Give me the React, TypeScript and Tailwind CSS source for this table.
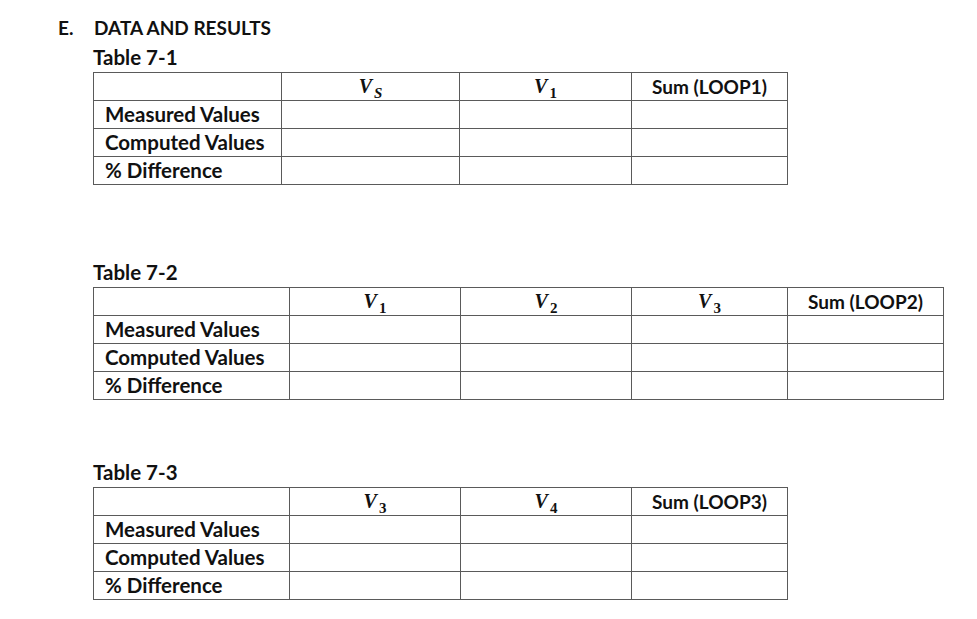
import React from 'react';

// Header cell content: either plain text or a math symbol V with subscript
type Head = { v: string; italicSub?: boolean } | { text: string };

interface LabTableProps {
  cols: string;
  heads: Head[];
}

const rowLabels = ['Measured Values', 'Computed Values', '% Difference'];

const MathV: React.FC<{ sub: string; italicSub?: boolean }> = ({ sub, italicSub }) => (
  <span className="font-[family-name:'Liberation_Serif',serif] italic font-bold text-[20px] leading-none">
    V
    <sub className={`text-[15px] ml-[2px] relative top-[5px] ${italicSub ? 'italic' : 'not-italic'}`}>{sub}</sub>
  </span>
);

const LabTable: React.FC<LabTableProps> = ({ cols, heads }) => {
  const cell = 'h-[28px] border-l border-t border-[#5a5a5a]';
  return (
    <div className={`grid ${cols} border-r border-b border-[#5a5a5a] w-fit`}>
      {/* header row */}
      <div className={cell} />
      {heads.map((h, i) => (
        <div key={i} className={`${cell} flex justify-center items-start pt-[3px]`}>
          {'text' in h ? (
            <span className="text-[19px] leading-[22px]">{h.text}</span>
          ) : (
            <span className="leading-[22px]">
              <MathV sub={h.v} italicSub={h.italicSub} />
            </span>
          )}
        </div>
      ))}
      {/* body rows */}
      {rowLabels.map((label) => (
        <React.Fragment key={label}>
          <div className={`${cell} flex items-center pl-[11px] text-[20.5px]`}>{label}</div>
          {heads.map((_, i) => (
            <div key={i} className={cell} />
          ))}
        </React.Fragment>
      ))}
    </div>
  );
};

export default function App() {
  return (
    <div className="w-[977px] h-[619px] bg-white text-[#111] font-bold font-[family-name:Lato,sans-serif] overflow-hidden">
      <div className="pl-[58px]">
        <div className="mt-[16px] h-[24px] leading-[24px] flex text-[19px]">
          <span className="w-[36px]">E.</span>
          <span>DATA AND RESULTS</span>
        </div>

        <div className="pl-[35px]">
          <div className="mt-[5px] h-[24px] leading-[24px] text-[20.5px]">Table 7-1</div>
          <div className="mt-[3px]">
            <LabTable
              cols="grid-cols-[188px_178px_172px_156px]"
              heads={[{ v: 'S', italicSub: true }, { v: '1' }, { text: 'Sum (LOOP1)' }]}
            />
          </div>

          <div className="mt-[75px] h-[24px] leading-[24px] text-[20.5px]">Table 7-2</div>
          <div className="mt-[3px]">
            <LabTable
              cols="grid-cols-[196px_171px_171px_156px_156px]"
              heads={[{ v: '1' }, { v: '2' }, { v: '3' }, { text: 'Sum (LOOP2)' }]}
            />
          </div>

          <div className="mt-[60px] h-[24px] leading-[24px] text-[20.5px]">Table 7-3</div>
          <div className="mt-[3px]">
            <LabTable
              cols="grid-cols-[196px_171px_171px_156px]"
              heads={[{ v: '3' }, { v: '4' }, { text: 'Sum (LOOP3)' }]}
            />
          </div>
        </div>
      </div>
    </div>
  );
}
